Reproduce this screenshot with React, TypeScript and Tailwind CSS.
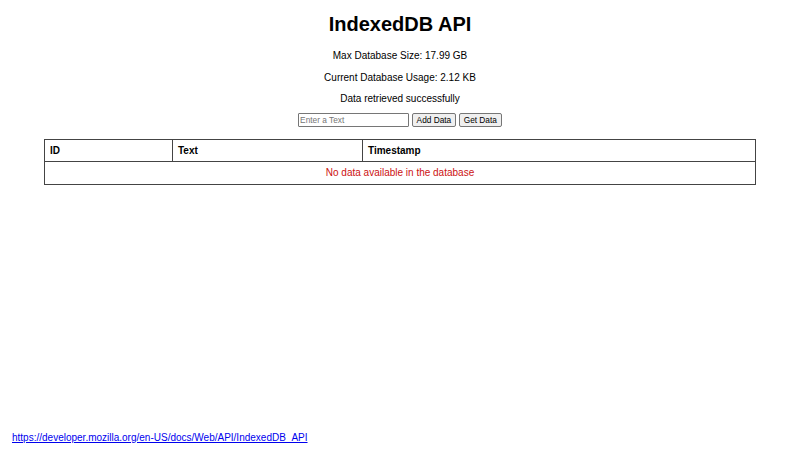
import React from "react";

export default function App() {
  return (
    <div
      className="min-h-[450px] flex flex-col bg-white text-black text-[10px] leading-[11.5px] px-[5px]"
      style={{ fontFamily: '"Liberation Sans", Arial, sans-serif' }}
    >
      <h1 className="mt-[13px] text-center text-[20px] leading-[23px] font-bold">IndexedDB API</h1>
      <p className="mt-[14px] text-center">Max Database Size: 17.99 GB</p>
      <p className="mt-[10px] text-center">Current Database Usage: 2.12 KB</p>
      <p className="mt-[10px] text-center">Data retrieved successfully</p>
      <div className="mt-[8px] flex justify-center items-center gap-[2.5px]">
        <input
          type="text"
          placeholder="Enter a Text"
          className="w-[111px] h-[14px] border border-[#767676] rounded-[1px] px-[1px] text-[8.3px] leading-[10px] placeholder:text-[#757575] outline-none"
        />
        <button className="h-[14px] px-[4px] border border-[#767676] rounded-[2px] bg-[#efefef] text-[8.3px] leading-[10px] text-black">
          Add Data
        </button>
        <button className="h-[14px] px-[4px] border border-[#767676] rounded-[2px] bg-[#efefef] text-[8.3px] leading-[10px] text-black">
          Get Data
        </button>
      </div>
      <table className="mt-[12px] mx-auto w-[712px] border-collapse">
        <thead>
          <tr>
            <th className="w-[128px] border border-[#444] px-[5px] py-[5px] text-left font-bold">ID</th>
            <th className="w-[190px] border border-[#444] px-[5px] py-[5px] text-left font-bold">Text</th>
            <th className="border border-[#444] px-[5px] py-[5px] text-left font-bold">Timestamp</th>
          </tr>
        </thead>
        <tbody>
          <tr>
            <td colSpan={3} className="border border-[#444] px-[5px] py-[5px] text-center text-[#cc1111]">
              No data available in the database
            </td>
          </tr>
        </tbody>
      </table>
      <div className="mt-auto pl-[7px] pb-[7px]">
        <a href="#" className="text-[#0000ee] underline">
          https://developer.mozilla.org/en-US/docs/Web/API/IndexedDB_API
        </a>
      </div>
    </div>
  );
}
